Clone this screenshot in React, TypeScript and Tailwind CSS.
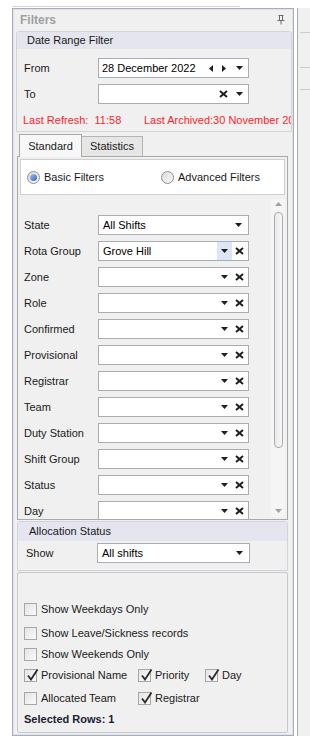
import React from 'react';

const Arrow = () => (
  <svg width="7" height="4" viewBox="0 0 7 4">
    <path d="M0 0h7L3.5 4z" fill="#1e1e1e" />
  </svg>
);

const Cross = () => (
  <svg width="9" height="8" viewBox="0 0 9 8">
    <path d="M1 1l7 6M8 1L1 7" stroke="#1e1e1e" strokeWidth="2" />
  </svg>
);

const Tri = ({ dir }: { dir: 'l' | 'r' }) => (
  <svg width="4" height="7" viewBox="0 0 4 7">
    <path d={dir === 'l' ? 'M4 0v7L0 3.5z' : 'M0 0v7L4 3.5z'} fill="#1e1e1e" />
  </svg>
);

function Combo({ value = '', clear = true, hot = false, w = 'w-[151px]' }: { value?: string; clear?: boolean; hot?: boolean; w?: string }) {
  return (
    <div className={`flex h-[20px] ${w} shrink-0 items-center border border-[#abadb3] bg-white`}>
      <span className="flex-1 truncate pl-[4px] text-[11px] text-black">{value}</span>
      <span className={`flex h-full w-[15px] items-center justify-center ${hot ? 'bg-[#dde5f6]' : ''}`}>
        <Arrow />
      </span>
      {clear ? (
        <span className="flex w-[16px] items-center justify-center pr-[1px]">
          <Cross />
        </span>
      ) : (
        <span className="w-[2px]" />
      )}
    </div>
  );
}

function Check({ label, checked = false, className = '' }: { label: string; checked?: boolean; className?: string }) {
  return (
    <div className={`flex h-[13px] items-center gap-[4px] ${className}`}>
      <span className="relative flex h-[13px] w-[13px] shrink-0 items-center justify-center border border-[#a7a7a7] bg-gradient-to-br from-[#e4e4e4] to-[#fafafa]">
        {checked && (
          <svg width="13" height="13" viewBox="0 0 13 13" className="absolute -top-[2px] left-[1px]">
            <path d="M2 7.5l3 4L11.5 1.5" stroke="#2a2a2a" strokeWidth="1.8" fill="none" />
          </svg>
        )}
      </span>
      <span className="whitespace-nowrap text-[11px] leading-[13px] text-[#1a1a1a]">{label}</span>
    </div>
  );
}

function Radio({ label, on = false }: { label: string; on?: boolean }) {
  return (
    <div className="flex items-center gap-[4px]">
      <span className="flex h-[13px] w-[13px] items-center justify-center rounded-full border border-[#8e8f8f] bg-gradient-to-br from-[#dcdcdc] to-[#f8f8f8]">
        {on && <span className="h-[7px] w-[7px] rounded-full bg-gradient-to-br from-[#9fc3f4] to-[#2d64c8]" />}
      </span>
      <span className="text-[11px] text-[#1a1a1a]">{label}</span>
    </div>
  );
}

const rows: { label: string; value?: string; clear?: boolean; hot?: boolean }[] = [
  { label: 'State', value: 'All Shifts', clear: false },
  { label: 'Rota Group', value: 'Grove Hill', hot: true },
  { label: 'Zone' },
  { label: 'Role' },
  { label: 'Confirmed' },
  { label: 'Provisional' },
  { label: 'Registrar' },
  { label: 'Team' },
  { label: 'Duty Station' },
  { label: 'Shift Group' },
  { label: 'Status' },
  { label: 'Day' },
];

export default function App() {
  return (
    <div className="relative h-[746px] w-[310px] overflow-hidden bg-white font-['Liberation_Sans',Arial,sans-serif] text-[11px]">
      {/* faint line above the panel */}
      <div className="ml-[12px] mt-[6px] h-[1px] w-[228px] bg-[#d6d6d6]" />
      <div className="flex">
        {/* Filters panel */}
        <div className="ml-[12px] mt-[1px] flex h-[728px] w-[282px] flex-col border border-[#a7adb9] bg-[#f0f0f0] shadow-[inset_0_0_0_1px_#dfe2e7]">
          {/* title bar */}
          <div className="flex h-[22px] shrink-0 items-center justify-between pl-[7px] pr-[8px]">
            <span className="text-[12px] font-bold text-[#a0a0a0]">Filters</span>
            <svg width="8" height="10" viewBox="0 0 8 10">
              <path d="M1.5 0.5h5M2.5 0.5v4.5M5.5 0.5v4.5M0.5 5.5h7M4 5.5v4" stroke="#6b6b6b" strokeWidth="1" fill="none" />
            </svg>
          </div>

          {/* Date range group */}
          <div className="ml-[3px] h-[101px] w-[276px] shrink-0 overflow-hidden rounded-t-[3px] border border-[#d2d4da] bg-[#f0f0f0]">
            <div className="flex h-[17px] items-center rounded-t-[3px] bg-[#e4e5ee] pl-[10px] text-[11px] text-[#1a1a1a]">
              Date Range Filter
            </div>
            <div className="mt-[9px] flex items-center">
              <span className="w-[81px] shrink-0 pl-[7px] text-[11px] text-[#1a1a1a]">From</span>
              <div className="flex h-[20px] w-[151px] shrink-0 items-center border border-[#abadb3] bg-white">
                <span className="flex-1 whitespace-nowrap pl-[3px] text-[11px] text-black">28 December 2022</span>
                <span className="flex w-[14px] justify-center"><Tri dir="l" /></span>
                <span className="flex w-[12px] justify-center"><Tri dir="r" /></span>
                <span className="flex w-[18px] justify-center"><Arrow /></span>
              </div>
            </div>
            <div className="mt-[6px] flex items-center">
              <span className="w-[81px] shrink-0 pl-[7px] text-[11px] text-[#1a1a1a]">To</span>
              <div className="flex h-[20px] w-[151px] shrink-0 items-center justify-end border border-[#abadb3] bg-white">
                <span className="flex w-[14px] justify-center"><Cross /></span>
                <span className="flex w-[18px] justify-center"><Arrow /></span>
              </div>
            </div>
            <div className="mt-[8px] flex whitespace-nowrap pl-[6px] text-[11px] text-[#ff1e2d]">
              <span className="w-[121px] shrink-0">Last Refresh:&nbsp; 11:58</span>
              <span className="shrink-0">Last Archived:30 November 2022</span>
            </div>
          </div>

          {/* Tabs */}
          <div className="ml-[4px] mt-[2px] flex shrink-0 items-end">
            <div className="relative z-10 -mb-[1px] ml-[2px] flex h-[23px] w-[63px] items-center justify-center border border-b-0 border-[#a9a9a9] bg-[#f7f7f7] text-[11px] text-[#1a1a1a]">
              Standard
            </div>
            <div className="flex h-[20px] w-[61px] items-center justify-center border border-l-0 border-b-0 border-[#b4b4b4] bg-[#e6e6e6] text-[11px] text-[#1a1a1a]">
              Statistics
            </div>
          </div>
          <div className="ml-[4px] flex h-[364px] w-[271px] shrink-0 flex-col overflow-hidden border border-[#a9a9a9] bg-[#f0f0f0]">
            <div className="mx-[2px] mt-[2px] flex h-[36px] shrink-0 items-center border border-[#cfcfcf] bg-white pl-[6px]">
              <div className="w-[134px]"><Radio label="Basic Filters" on /></div>
              <Radio label="Advanced Filters" />
            </div>
            <div className="flex min-h-0 flex-1">
              <div className="flex min-h-0 flex-1 flex-col overflow-hidden pt-[20px]">
                {rows.map((r) => (
                  <div key={r.label} className="flex h-[26px] shrink-0 items-start">
                    <span className="flex h-[20px] w-[80px] shrink-0 items-center pl-[6px] text-[11px] text-[#1a1a1a]">{r.label}</span>
                    <Combo value={r.value} clear={r.clear !== false} hot={r.hot} />
                  </div>
                ))}
              </div>
              {/* scrollbar */}
              <div className="mb-[2px] mr-[2px] mt-[4px] flex w-[14px] flex-col items-center bg-[#f5f5f5]">
                <svg width="7" height="4" viewBox="0 0 7 4" className="mt-[3px]">
                  <path d="M3.5 0L7 4H0z" fill="#a0a0a0" />
                </svg>
                <div className="mt-[6px] h-[236px] w-[9px] rounded-[4px] border border-[#a9abb0] bg-gradient-to-r from-[#e8e8e8] to-[#f8f8f8]" />
                <div className="flex-1" />
                <svg width="7" height="4" viewBox="0 0 7 4" className="mb-[4px]">
                  <path d="M0 0h7L3.5 4z" fill="#a0a0a0" />
                </svg>
              </div>
            </div>
          </div>

          {/* Allocation status */}
          <div className="ml-[4px] mt-[1px] h-[50px] w-[271px] shrink-0 rounded-t-[3px] border border-[#d2d4da] bg-[#f0f0f0]">
            <div className="flex h-[19px] items-center rounded-t-[3px] bg-[#e4e5ee] pl-[11px] text-[11px] text-[#1a1a1a]">
              Allocation Status
            </div>
            <div className="mt-[2px] flex items-start">
              <span className="flex h-[20px] w-[79px] items-center pl-[8px] text-[11px] text-[#1a1a1a]">Show</span>
              <Combo value="All shifts" clear={false} w="w-[153px]" />
            </div>
          </div>

          {/* Options box */}
          <div className="ml-[4px] mt-[1px] h-[161px] w-[271px] shrink-0 rounded-[2px] border border-[#c6c8ce] bg-[#f0f0f0] pl-[6px] pt-[30px]">
            <Check label="Show Weekdays Only" />
            <Check label="Show Leave/Sickness records" className="mt-[11px]" />
            <Check label="Show Weekends Only" className="mt-[8px]" />
            <div className="mt-[8px] flex">
              <Check label="Provisional Name" checked className="w-[114px]" />
              <Check label="Priority" checked className="w-[67px]" />
              <Check label="Day" checked />
            </div>
            <div className="mt-[10px] flex">
              <Check label="Allocated Team" className="w-[114px]" />
              <Check label="Registrar" checked />
            </div>
            <div className="mt-[8px] text-[11px] font-bold leading-[13px] text-[#1a2030]">Selected Rows: 1</div>
          </div>
        </div>

        {/* neighbouring panel edge */}
        <div className="ml-[3px] mt-[1px] flex h-[728px] w-[13px] flex-col border-l border-[#a7adb9] bg-[#f0f0f0]">
          <div className="ml-[2px] mt-[24px] h-[1px] bg-[#c8ccd6]" />
          <div className="ml-[2px] mt-[34px] h-[1px] bg-[#c8ccd6]" />
          <div className="ml-[2px] mt-[21px] h-[1px] bg-[#c8ccd6]" />
        </div>
      </div>
    </div>
  );
}
